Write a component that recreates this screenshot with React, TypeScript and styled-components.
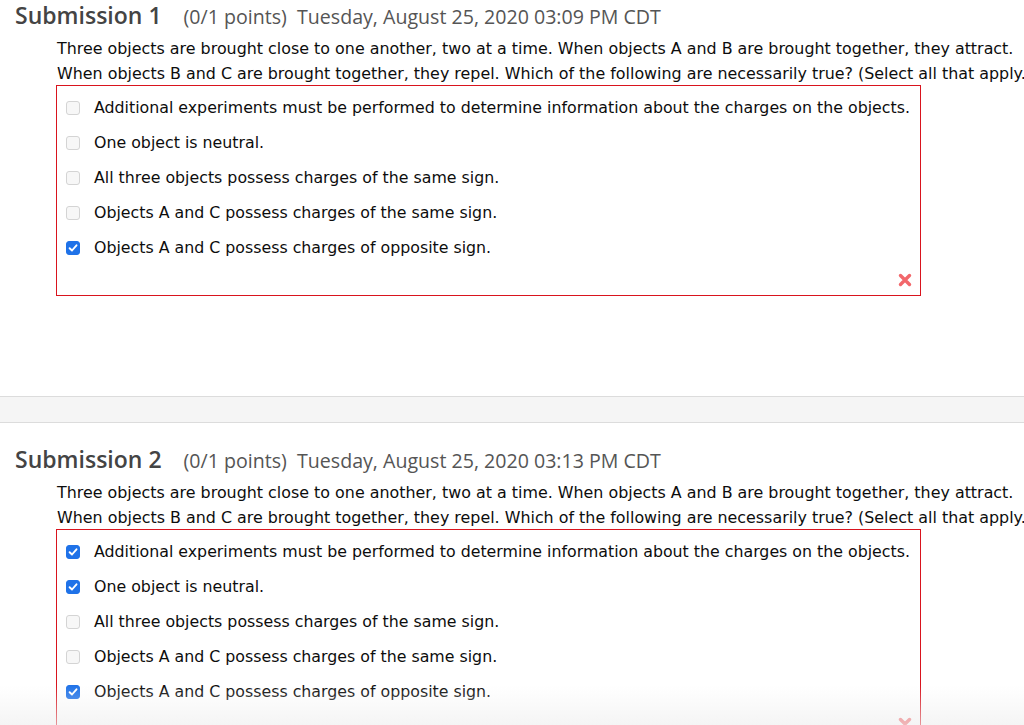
import React from 'react';
import styled, {createGlobalStyle} from 'styled-components';

const GlobalStyle = createGlobalStyle`
  html, body {
    margin: 0;
    padding: 0;
    background: #fff;
    overflow: hidden;
  }
`;

type Submission = {
    number: number;
    time: string;
    checked: boolean[];
};

const question = [
    'Three objects are brought close to one another, two at a time. When objects A and B are brought together, they attract.',
    'When objects B and C are brought together, they repel. Which of the following are necessarily true? (Select all that apply.)',
];

const options = [
    'Additional experiments must be performed to determine information about the charges on the objects.',
    'One object is neutral.',
    'All three objects possess charges of the same sign.',
    'Objects A and C possess charges of the same sign.',
    'Objects A and C possess charges of opposite sign.',
];

const submissions: Submission[] = [
    {number: 1, time: 'Tuesday, August 25, 2020 03:09 PM CDT', checked: [false, false, false, false, true]},
    {number: 2, time: 'Tuesday, August 25, 2020 03:13 PM CDT', checked: [true, true, false, false, true]},
];

const Box: React.FC<{checked: boolean}> = ({checked}) => (
    <CheckBox $checked={checked}>
        {checked && (
            <svg width="10" height="10" viewBox="0 0 10 10">
                <path d="M1.6 5.2 L4 7.5 L8.5 2.3" fill="none" stroke="#fff" strokeWidth="1.9"
                      strokeLinecap="round" strokeLinejoin="round"/>
            </svg>
        )}
    </CheckBox>
);

const WrongMark = () => (
    <Mark>
        <svg width="14" height="14" viewBox="0 0 14 14">
            <path d="M2.5 2.5 L11.5 11.5 M11.5 2.5 L2.5 11.5" stroke="#f2676b" strokeWidth="3.4"
                  strokeLinecap="round"/>
        </svg>
    </Mark>
);

const App: React.FC = () => {
    return (
        <Page>
            <GlobalStyle/>
            {submissions.map((s, i) => (
                <React.Fragment key={s.number}>
                    {i > 0 && <Separator/>}
                    <Section $first={i === 0}>
                        <Header>
                            <Title>Submission {s.number}</Title>
                            <Meta>(0/1 points)&nbsp; {s.time}</Meta>
                        </Header>
                        <Question>
                            {question.map((line) => <Line key={line}>{line}</Line>)}
                        </Question>
                        <Answers>
                            {options.map((opt, k) => (
                                <Option key={opt}>
                                    <Box checked={s.checked[k]}/>
                                    <Label>{opt}</Label>
                                </Option>
                            ))}
                            <WrongMark/>
                        </Answers>
                    </Section>
                </React.Fragment>
            ))}
            <Fade/>
        </Page>
    );
};

const Page = styled.div`
  position: relative;
  width: 1024px;
  height: 725px;
  overflow: hidden;
  background: #fff;
`;

const Section = styled.section<{$first: boolean}>`
  padding: ${p => p.$first ? '0' : '21px'} 0 0 15px;
  height: ${p => p.$first ? '396px' : 'auto'};
  box-sizing: border-box;
`;

const Separator = styled.div`
  height: 25px;
  background: #f5f5f5;
  border-top: 1px solid #dcdcdc;
  border-bottom: 1px solid #dcdcdc;
`;

const Header = styled.div`
  display: flex;
  align-items: baseline;
  height: 31px;
  font-family: "Open Sans", sans-serif;
  color: #444;
`;

const Title = styled.h2`
  margin: 0;
  font-size: 23px;
  font-weight: 600;
  line-height: 30px;
  margin-right: 22px;
`;

const Meta = styled.span`
  font-size: 19.6px;
  color: #555;
`;

const Question = styled.div`
  margin: 5px 0 0 42px;
  font-family: "DejaVu Sans", Verdana, sans-serif;
  font-size: 15.9px;
  line-height: 25px;
  color: #0d0d0d;
  white-space: nowrap;
`;

const Line = styled.div``;

const Answers = styled.div`
  position: relative;
  margin: -1px 0 0 41px;
  width: 865px;
  height: 211px;
  border: 1px solid #d9141e;
  padding-top: 4px;
  box-sizing: border-box;
`;

const Option = styled.div`
  display: flex;
  align-items: center;
  height: 35px;
  padding-left: 9px;
`;

const CheckBox = styled.span<{$checked: boolean}>`
  display: inline-flex;
  align-items: center;
  justify-content: center;
  flex: none;
  width: 14px;
  height: 14px;
  border-radius: 3px;
  box-sizing: border-box;
  margin-right: 14px;
  background: ${p => p.$checked ? '#1f72e8' : '#f7f7f7'};
  border: 1px solid ${p => p.$checked ? '#1f72e8' : '#d4d4d4'};
`;

const Label = styled.span`
  font-family: "DejaVu Sans", Verdana, sans-serif;
  font-size: 15.8px;
  color: #0d0d0d;
  white-space: nowrap;
`;

const Mark = styled.span`
  position: absolute;
  right: 8px;
  bottom: 8px;
  display: flex;
`;

const Fade = styled.div`
  position: absolute;
  left: 0;
  right: 0;
  bottom: 0;
  height: 40px;
  background: linear-gradient(to bottom, rgba(240, 240, 240, 0), rgba(238, 238, 238, 0.6));
  pointer-events: none;
`;

export default App;
